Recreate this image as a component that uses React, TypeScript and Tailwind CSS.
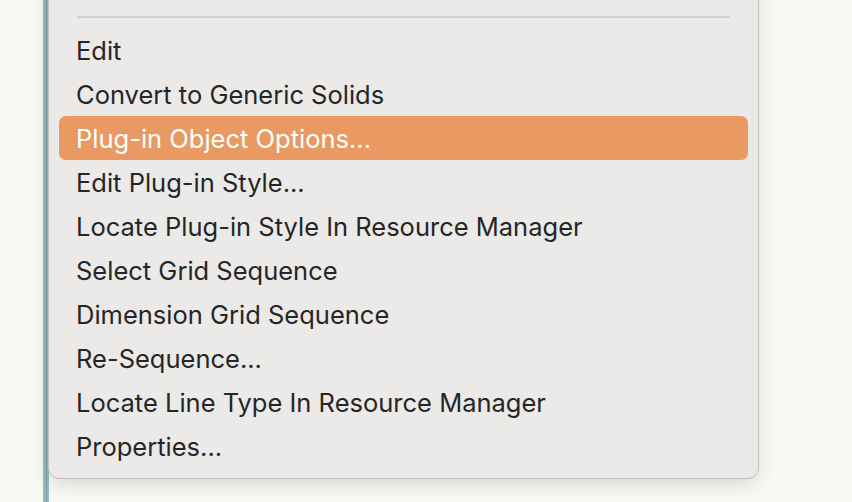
const items = [
  "Edit",
  "Convert to Generic Solids",
  "Plug-in Object Options...",
  "Edit Plug-in Style...",
  "Locate Plug-in Style In Resource Manager",
  "Select Grid Sequence",
  "Dimension Grid Sequence",
  "Re-Sequence...",
  "Locate Line Type In Resource Manager",
  "Properties...",
];

export default function App() {
  const active = 2;
  return (
    <div
      className="relative w-[852px] h-[502px] overflow-hidden bg-[#f8f8f4]"
      style={{ fontFamily: "Inter, 'Noto Sans', sans-serif" }}
    >
      {/* canvas edge behind the menu */}
      <div className="absolute left-[43px] top-0 h-full w-[6px] bg-[#8fbcc4] flex justify-center">
        <div className="w-px h-full bg-[#7a9ca2]" />
      </div>

      <div className="absolute left-[48px] top-[-30px] w-[711px] h-[509px] rounded-[11px] bg-[#ebeae8] border border-[#c2c1be] shadow-[0_6px_18px_rgba(0,0,0,0.12)] flex flex-col pt-[45px] pb-[10px] px-[10px]">
        <div className="mx-[18px] h-[2px] bg-[#d2d1cf]" />
        <div className="mt-[10px] flex flex-col">
          {items.map((label, i) => (
            <div
              key={label}
              className={
                i === active
                  ? "h-[44px] flex items-center pt-[2px] pl-[17px] pr-[18px] rounded-[7px] bg-[#e99a62] text-white text-[25.5px]"
                  : "h-[44px] flex items-center pt-[2px] pl-[17px] pr-[18px] text-[#262626] text-[25.5px]"
              }
            >
              {label}
            </div>
          ))}
        </div>
      </div>
    </div>
  );
}
